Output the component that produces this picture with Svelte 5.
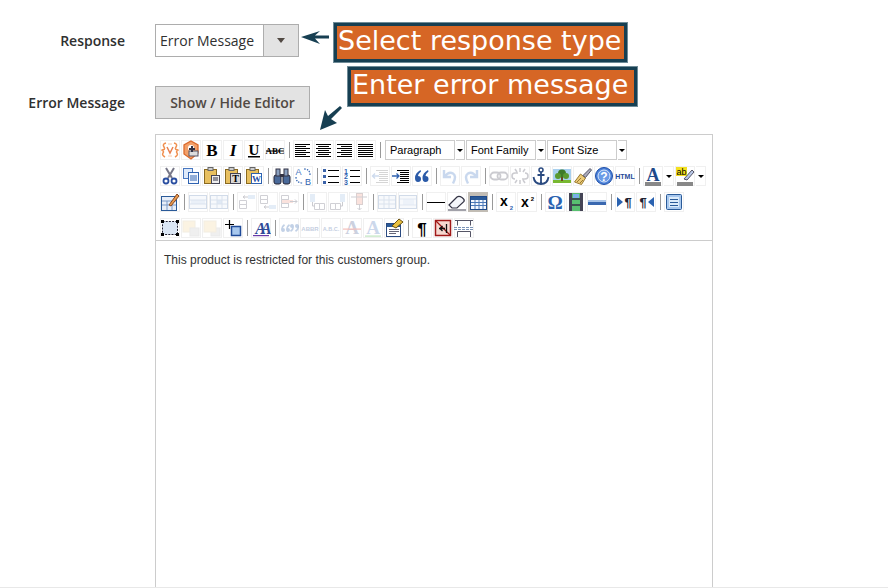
<script>
    // toolbar glyphs, all on a 20x20 grid
    const bars = (rows, color = "#000") =>
        rows.map(([x, y, w]) => `<rect x="${x}" y="${y}" width="${w}" height="1" fill="${color}"/>`).join("");

    const icons = {
        flash: `<path d="M6 3Q2 4 4 7T1.500 10q3 1 1.500 3t2 4M14 3q4 1 2 4t2.500 3q-3 1-1.500 3t-2 4" fill="none" stroke="#f09050" stroke-width="1.5"/><path d="M7 7l3 6 3-6" fill="none" stroke="#e88050" stroke-width="1.5"/><path d="M8 4h4M8 16h4" stroke="#f8c8a8"/>`,
        palette: `<path d="M10 1l7 4v8l-7 6-7-5V5z" fill="#f2a06a" stroke="#dc6a2c" stroke-width="1.300"/><circle cx="10" cy="8" r="3" fill="#fff"/><rect x="8" y="11" width="9" height="5" fill="#ddd" stroke="#556"/><path d="M11 6v6M8 9h6" stroke="#334" stroke-width="2"/>`,
        bold: `<text x="10" y="16" class="serif" font-size="17" font-weight="700" text-anchor="middle">B</text>`,
        italic: `<text x="10" y="16" class="serif" font-size="17" font-weight="700" font-style="italic" text-anchor="middle">I</text>`,
        underline: `<text x="10" y="14.500" class="serif" font-size="15" font-weight="700" text-anchor="middle">U</text><rect x="4" y="16" width="12" height="1.500"/>`,
        strike: `<text x="10" y="14" class="serif" font-size="9" font-weight="700" text-anchor="middle">ABC</text><rect x="1" y="10.500" width="18" height="1"/>`,
        left: bars([[2,4,15],[2,6,11],[2,8,15],[2,10,11],[2,12,15],[2,14,11],[2,16,15]]),
        center: bars([[2,4,15],[4,6,11],[2,8,15],[4,10,11],[2,12,15],[4,14,11],[2,16,15]]),
        right: bars([[2,4,15],[6,6,11],[2,8,15],[6,10,11],[2,12,15],[6,14,11],[2,16,15]]),
        justify: bars([[2,4,15],[2,6,15],[2,8,15],[2,10,15],[2,12,15],[2,14,15],[2,16,15]]),
        cut: `<path d="M6 2l6 10M14 2L8 12" stroke="#778" stroke-width="2"/><circle cx="6" cy="15" r="2.500" fill="none" stroke="#2a4ea0" stroke-width="1.800"/><circle cx="14" cy="15" r="2.500" fill="none" stroke="#2a4ea0" stroke-width="1.800"/>`,
        copy: `<rect x="2.500" y="2.500" width="9" height="10" fill="#dfeafa" stroke="#4a78c0"/><rect x="7.500" y="6.500" width="10" height="11" fill="#f4f8ff" stroke="#2f62b0"/><path d="M9 10h7M9 12h7M9 14h7" stroke="#2f62b0"/>`,
        paste: `<rect x="2.500" y="3.500" width="12" height="14" fill="#e8c060" stroke="#8a6a20"/><rect x="6" y="1.500" width="5" height="3" fill="#ccc" stroke="#666"/><rect x="9.500" y="9.500" width="8" height="8" fill="#eee" stroke="#445"/><path d="M11 12h5M11 14h5" stroke="#334"/>`,
        pastetext: `<rect x="2.500" y="3.500" width="12" height="14" fill="#e8c060" stroke="#8a6a20"/><rect x="6" y="1.500" width="5" height="3" fill="#ccc" stroke="#666"/><rect x="7.500" y="7.500" width="10" height="10" fill="#d8d8d8" stroke="#445"/><text x="12.500" y="16" class="serif" font-size="10" font-weight="700" text-anchor="middle">T</text>`,
        pasteword: `<rect x="2.500" y="3.500" width="12" height="14" fill="#e8c060" stroke="#8a6a20"/><rect x="6" y="1.500" width="5" height="3" fill="#ccc" stroke="#666"/><rect x="7.500" y="7.500" width="10" height="10" fill="#fff" stroke="#2f62b0"/><text x="12.500" y="16" class="serif" font-size="9" font-weight="700" fill="#1f4fa8" text-anchor="middle">W</text>`,
        find: `<rect x="2" y="9" width="7" height="9" rx="2" fill="#4a6a9a" stroke="#223"/><rect x="11" y="9" width="7" height="9" rx="2" fill="#4a6a9a" stroke="#223"/><rect x="4" y="3" width="4" height="7" fill="#8aa0c0" stroke="#334"/><rect x="12" y="3" width="4" height="7" fill="#8aa0c0" stroke="#334"/><rect x="8" y="8" width="4" height="3" fill="#334"/>`,
        replace: `<text x="5.500" y="9" class="sans" font-size="9" fill="#4a78c0" text-anchor="middle">A</text><text x="15" y="18.500" class="sans" font-size="9" fill="#2f62b0" text-anchor="middle">B</text><path d="M3 11q0 6 7 6M11 3q6 0 6 6" fill="none" stroke="#2f62b0" stroke-width="1.200" stroke-dasharray="1.500 1.200"/>`,
        ul: `<rect x="2" y="3" width="3" height="3" fill="#3a62a8"/><rect x="2" y="9" width="3" height="3" fill="#3a62a8"/><rect x="2" y="15" width="3" height="3" fill="#3a62a8"/>` + bars([[7,4,11],[7,10,11],[7,16,11]]),
        ol: `<text x="4" y="7.500" class="sans" font-size="7" font-weight="700" fill="#2f62b0" text-anchor="middle">1</text><text x="4" y="13" class="sans" font-size="7" font-weight="700" fill="#2f62b0" text-anchor="middle">2</text><text x="4" y="18.500" class="sans" font-size="7" font-weight="700" fill="#2f62b0" text-anchor="middle">3</text>` + bars([[8,4,10],[8,10,10],[8,16,10]]),
        outdent: bars([[6,4,12],[9,6,9],[9,8,9],[9,10,9],[9,12,9],[9,14,9],[6,16,12]], "#777") + `<path d="M9 10H2M5 7.500L2.500 10 5 12.500" fill="none" stroke="#5f8ac8" stroke-width="1.300"/>`,
        indent: bars([[6,4,12],[9,6,9],[9,8,9],[9,10,9],[9,12,9],[9,14,9],[6,16,12]]) + `<path d="M1 10h7M5.500 7.500L8 10l-2.500 2.500" fill="none" stroke="#2f62b0" stroke-width="1.300"/>`,
        quote: `<path d="M8.500 4Q3 7 3 12q0 4 3 4t3-3-3-3q0-2 3-4.500zM16 4q-5.500 3-5.500 8 0 4 3 4t3-3-3-3q0-2 3-4.500z" fill="#2a5aa8"/>`,
        undo: `<path d="M4 4v7h7M5 10q4-5 8-2.500t0 10" fill="none" stroke="#4f80c8" stroke-width="2.400"/>`,
        redo: `<path d="M16 4v7H9M15 10q-4-5-8-2.500t0 10" fill="none" stroke="#4f80c8" stroke-width="2.400"/>`,
        link: `<rect x="1.500" y="6.500" width="10" height="7" rx="3.500" fill="none" stroke="#556" stroke-width="1.800"/><rect x="8.500" y="6.500" width="10" height="7" rx="3.500" fill="none" stroke="#556" stroke-width="1.800"/>`,
        unlink: `<path d="M2 10q0-3 3-3h3M18 10q0 3-3 3h-3M2 10q0 3 3 3M18 10q0-3-3-3M10 2v4M10 14v4M5 3l2 3M15 17l-2-3M15 3l-2 3M5 17l2-3" fill="none" stroke="#556" stroke-width="1.500"/>`,
        anchor: `<circle cx="10" cy="4" r="2" fill="none" stroke="#2a4a80" stroke-width="1.500"/><path d="M10 6v12M6.500 9h7M2.500 11q1 7 7.500 7t7.500-7" fill="none" stroke="#2a4a80" stroke-width="1.800"/>`,
        image: `<rect x="1" y="3" width="18" height="14" fill="#a8d0ee"/><rect x="1" y="14" width="18" height="3" fill="#78b830"/><circle cx="10" cy="7.500" r="4" fill="#3e7a28"/><circle cx="6" cy="10" r="3" fill="#5a9a30"/><circle cx="14" cy="10" r="3" fill="#5a9a30"/><rect x="9" y="11" width="2" height="4" fill="#6a4a20"/>`,
        cleanup: `<path d="M1.500 16l6-8 5 4-4 6.500z" fill="#eccb78" stroke="#9a7a30"/><path d="M10 9.500l7-7 1.500 1.500-6 7.500z" fill="#aab" stroke="#556"/><path d="M4 16l4-4M7 17l3-3" stroke="#9a7a30"/>`,
        help: `<circle cx="10" cy="10" r="8.500" fill="#4a80d8" stroke="#1f4fa8"/><circle cx="10" cy="10" r="6" fill="#6a9ae6" stroke="#dbe8fb"/><text x="10" y="14.500" class="sans" font-size="12" font-weight="700" fill="#fff" text-anchor="middle">?</text>`,
        html: `<text x="10" y="13" class="sans" font-size="7" font-weight="700" fill="#1f4a98" text-anchor="middle">HTML</text>`,
        fore: `<text x="10" y="15" class="serif" font-size="18" font-weight="700" fill="#1f4a8a" text-anchor="middle">A</text><rect x="2" y="16" width="16" height="4" fill="#888"/>`,
        back: `<rect x="1" y="1" width="11" height="9" fill="#f4e020"/><text x="6.500" y="9" class="sans" font-size="9" text-anchor="middle">ab</text><path d="M9 13l8-9 2 2-7 8z" fill="#b8c8e8" stroke="#556"/><rect x="2" y="16" width="16" height="4" fill="#888"/>`,
        tableprops: `<rect x="1.500" y="4.500" width="15" height="14" fill="#e8eef8" stroke="#2a5a98"/><path d="M2 9h14M2 13h14M7 9v9M12 9v9" stroke="#7a9ac8"/><path d="M9 13L17 2l2 2-8 10z" fill="#e89a50" stroke="#8a4a20"/>`,
        rowprops: `<rect x="1.500" y="3.500" width="17" height="13" fill="#e8eef8" stroke="#6a8ab8"/><rect x="3" y="8" width="14" height="4" fill="#bcd0ea"/><path d="M2 8h16M2 12h16" stroke="#8aa4c8"/>`,
        cellprops: `<rect x="1.500" y="3.500" width="17" height="13" fill="#e8eef8" stroke="#6a8ab8"/><rect x="8" y="8" width="5" height="4" fill="#9ab8e0"/><path d="M2 8h16M2 12h16M8 4v12M13 4v12" stroke="#8aa4c8"/>`,
        rowbefore: `<path d="M2.500 8.500h7v4h-7zM2.500 12.500h7v4h-7z" fill="#fff" stroke="#667"/><rect x="11" y="3" width="7" height="4" fill="#a8c4e8"/><path d="M11 5H6M8 3.500L6 5l2 1.500" stroke="#556" fill="none"/>`,
        rowafter: `<path d="M2.500 3.500h7v4h-7zM2.500 7.500h7v4h-7z" fill="#fff" stroke="#667"/><rect x="11" y="13" width="7" height="4" fill="#a8c4e8"/><path d="M11 15H6M8 13.500L6 15l2 1.500" stroke="#556" fill="none"/>`,
        rowdel: `<path d="M2.500 3.500h7v4h-7zM2.500 7.500h7v4h-7zM2.500 11.500h7v4h-7z" fill="#fff" stroke="#667"/><rect x="3" y="8" width="11" height="3" fill="#f0a090"/><path d="M11 9.500h7M16 7.500l2 2-2 2" stroke="#556" fill="none"/>`,
        colbefore: `<path d="M7.500 11.500h5v6h-5zM12.500 11.500h5v6h-5z" fill="#fff" stroke="#667"/><rect x="3" y="2" width="5" height="8" fill="#a8c4e8"/><path d="M5.500 10v4H8" stroke="#556" fill="none"/>`,
        colafter: `<path d="M2.500 11.500h5v6h-5zM7.500 11.500h5v6h-5z" fill="#fff" stroke="#667"/><rect x="12" y="2" width="5" height="8" fill="#a8c4e8"/><path d="M14.500 10v4H12" stroke="#556" fill="none"/>`,
        coldel: `<rect x="7.500" y="1.500" width="6" height="11" fill="#f0a090" stroke="#866"/><path d="M2 5h16M10.500 12v6M8.500 16l2 2 2-2" stroke="#667" fill="none"/>`,
        split: `<rect x="1.500" y="3.500" width="17" height="13" fill="#e8eef8" stroke="#6a8ab8"/><path d="M2 8h16M2 12h16M7 4v12M12 4v12" stroke="#8aa4c8"/>`,
        merge: `<rect x="1.500" y="3.500" width="17" height="13" fill="#e8eef8" stroke="#6a8ab8"/><rect x="5" y="7" width="11" height="6" fill="#c4d6ee"/><path d="M2 7h16M2 13h16" stroke="#a0b8d8"/>`,
        hr: `<rect x="1" y="10" width="18" height="1"/>`,
        eraser: `<path d="M2 13l8-8q2-1.500 5 .500t2 4l-7 6.500H5z" fill="#f4f6fa" stroke="#334" stroke-width="1.200"/><path d="M1 18h18" stroke="#445"/>`,
        table: `<rect x="2.500" y="4.500" width="16" height="13" fill="#f4f8ff" stroke="#1f4a8a"/><rect x="3" y="5" width="15" height="3" fill="#2a5a98"/><path d="M3 10.500h15M3 13.500h15M7 8v9M11 8v9M15 8v9" stroke="#4a78b8"/>`,
        sub: `<text x="8" y="14" class="sans" font-size="14" font-weight="700" text-anchor="middle">x</text><text x="15.500" y="18" class="sans" font-size="6" font-weight="700" fill="#2f62b0" text-anchor="middle">2</text>`,
        sup: `<text x="8" y="15" class="sans" font-size="14" font-weight="700" text-anchor="middle">x</text><text x="15.500" y="9" class="sans" font-size="6" font-weight="700" text-anchor="middle">2</text>`,
        omega: `<text x="10" y="16.500" class="serif" font-size="19" font-weight="700" fill="#2a62b0" text-anchor="middle">Ω</text>`,
        film: `<rect x="3" y="1" width="14" height="18" fill="#58c070"/><rect x="3" y="1" width="3" height="18" fill="#445"/><rect x="14" y="1" width="3" height="18" fill="#445"/><path d="M6 7h8M6 13h8" stroke="#334" stroke-width="1.500"/><rect x="7" y="2" width="6" height="4" fill="#7ab0e8"/>`,
        rule: `<rect x="1" y="8" width="18" height="5" fill="#3a68b0"/><rect x="1" y="8" width="18" height="2" fill="#a8c4e8"/>`,
        ltr: `<path d="M2 5l6 5-6 5z" fill="#2a62b0"/><text x="13" y="15" class="sans" font-size="13" font-weight="700" fill="#223" text-anchor="middle">¶</text>`,
        rtl: `<path d="M18 5l-6 5 6 5z" fill="#2a62b0"/><text x="7" y="15" class="sans" font-size="13" font-weight="700" fill="#223" text-anchor="middle">¶</text>`,
        fullscreen: `<rect x="2.500" y="2.500" width="15" height="15" rx="1" fill="#a8c8ee" stroke="#2a5a98"/><rect x="5" y="5" width="10" height="10" fill="#dcebfa"/><path d="M6 7.500h8M6 10.500h8M6 13.500h8" stroke="#2a5a98"/>`,
        layer: `<rect x="2.500" y="3.500" width="15" height="13" fill="#dbe6f4" stroke="#223" stroke-dasharray="2 1.200"/><rect x="1" y="2" width="3" height="3"/><rect x="16" y="2" width="3" height="3"/><rect x="1" y="15" width="3" height="3"/><rect x="16" y="15" width="3" height="3"/>`,
        forward: `<rect x="2" y="3" width="12" height="11" fill="#f2d8a0" stroke="#d8c8a0"/><rect x="9" y="10" width="9" height="8" fill="#ccc" stroke="#bbb"/>`,
        backward: `<rect x="9" y="10" width="9" height="8" fill="#ccc" stroke="#bbb"/><rect x="2" y="3" width="12" height="11" fill="#f2d8a0" stroke="#d8c8a0"/>`,
        absolute: `<rect x="8.500" y="8.500" width="9" height="9" fill="#a8c8ee" stroke="#1f4a98" stroke-width="1.500"/><path d="M6.500 2v9M2 6.500h9" stroke="#000" stroke-width="1.200"/>`,
        styleprops: `<text x="10" y="15.500" class="serif" font-size="16" font-weight="700" font-style="italic" fill="#2f4a98" letter-spacing="-5" text-anchor="middle">AA</text><rect x="2" y="17" width="16" height="1.200" fill="#6a3aa8"/>`,
        cite: `<path d="M5 6q-3 2-3 5t2 3 2-2-2-2q0-1 2-2.500zM10 6q-3 2-3 5t2 3 2-2-2-2q0-1 2-2.500zM12 14q3-2 3-5t-2-3-2 2 2 2q0 1-2 2.500zM17 14q3-2 3-5t-2-3-2 2 2 2q0 1-2 2.500z" fill="#3a6ab0"/>`,
        abbr: `<text x="10" y="13" class="sans" font-size="6" font-weight="700" fill="#3a5a98" text-anchor="middle">ABBR</text>`,
        acronym: `<text x="10" y="13" class="sans" font-size="5.500" font-weight="700" fill="#3a5a98" text-anchor="middle">A.B.C.</text>`,
        del: `<text x="10" y="16" class="serif" font-size="19" font-weight="700" fill="#5a6a98" text-anchor="middle">A</text><rect x="1" y="10.500" width="18" height="1.200" fill="#e03020"/>`,
        ins: `<text x="10" y="16" class="serif" font-size="19" font-weight="700" fill="#5a80c0" text-anchor="middle">A</text><rect x="2" y="17.500" width="16" height="1.200" fill="#30b030"/>`,
        attribs: `<rect x="2.500" y="5.500" width="14" height="13" fill="#fff" stroke="#2a4a80"/><path d="M3 6h13v3H3z" fill="#2a5a98"/><path d="M5 11.500h10M5 13.500h10M5 15.500h7" stroke="#667"/><path d="M8 8l7-7 4 3-7 6z" fill="#e8c040" stroke="#6a5010"/>`,
        para: `<text x="10" y="16.500" class="sans" font-size="17" font-weight="700" text-anchor="middle">¶</text>`,
        nbsp: `<rect x="2.500" y="2.500" width="15" height="15" fill="#f6d8d0" stroke="#a01818" stroke-width="1.500"/><path d="M3 3l14 14" stroke="#a01818" stroke-width="1.300"/><path d="M13.500 6v9M6 10.500h6M9.500 8L7 10.500 9.500 13" stroke="#111" fill="none" stroke-width="1.300"/>`,
        pagebreak: `<path d="M1 2.500h18M3.500 2.500v5M16.500 2.500v5M3.500 13.500h13M3.500 13.500v5.500M16.500 13.500v5.500" fill="none" stroke="#556"/><path d="M0 9.500h20M0 11.500h20" stroke="#7a94b8" stroke-dasharray="3 1"/>`
    };

    // "|" marks a separator, "-" a greyed out button, "*" a pressed one
    const row1Start = ["flash","palette","bold","italic","underline","strike","|","left","center","right","justify","|"];
    const row2 = ["cut","copy","paste","pastetext","pasteword","|","find","replace","|","ul","ol","|","-outdent","indent","quote","|","-undo","-redo","|","-link","-unlink","anchor","image","cleanup","help","html","|"];
    const row3 = ["tableprops","|","-rowprops","-cellprops","|","-rowbefore","-rowafter","-rowdel","|","-colbefore","-colafter","-coldel","|","-split","-merge","|","hr","eraser","*table","|","sub","sup","|","omega","film","rule","|","ltr","rtl","|","fullscreen"];
    const row4 = ["layer","-forward","-backward","absolute","|","styleprops","|","-cite","-abbr","-acronym","-del","-ins","attribs","|","para","nbsp","pagebreak"];

    const parse = (t) => ({
        sep: t === "|",
        off: t[0] === "-",
        active: t[0] === "*",
        name: t.replace(/^[-*]/, "")
    });
</script>

{#snippet tools(list)}
    {#each list.map(parse) as t}
        {#if t.sep}
            <span class="sep"></span>
        {:else}
            <span class="btn" class:off={t.off} class:active={t.active}>
                <svg viewBox="0 0 20 20" width="20" height="20">{@html icons[t.name]}</svg>
            </span>
        {/if}
    {/each}
{/snippet}

{#snippet listbox(label, width)}
    <span class="listbox" style="width: {width}px">{label}</span>
    <span class="listarrow"><i class="caret"></i></span>
{/snippet}

{#snippet split(name)}
    <span class="btn">
        <svg viewBox="0 0 20 20" width="20" height="20">{@html icons[name]}</svg>
    </span>
    <span class="listarrow small"><i class="caret"></i></span>
{/snippet}

<div class="page">
    <div class="field">
        <div class="label">Response</div>
        <div class="select">
            <span class="select-value">Error Message</span>
            <span class="select-action"><i class="select-caret"></i></span>
        </div>
    </div>

    <div class="field second">
        <div class="label">Error Message</div>
        <div class="control">
            <button class="toggle" type="button">Show / Hide Editor</button>
            <div class="editor">
                <div class="toolbar">
                    <div class="row">
                        {@render tools(row1Start)}
                        <span class="push"></span>
                        {@render listbox("Paragraph", 70)}
                        {@render listbox("Font Family", 70)}
                        {@render listbox("Font Size", 70)}
                    </div>
                    <div class="row">
                        {@render tools(row2)}
                        {@render split("fore")}
                        {@render split("back")}
                    </div>
                    <div class="row">{@render tools(row3)}</div>
                    <div class="row">{@render tools(row4)}</div>
                </div>
                <div class="content">This product is restricted for this customers group.</div>
            </div>
        </div>
    </div>

    <svg class="arrow one" viewBox="0 0 32 20" width="32" height="20">
        <path d="M1 10L20 4l-5 4.500 14 0v3l-14 0 5 5.500z" fill="#173f52"/>
    </svg>
    <svg class="arrow two" viewBox="0 0 26 30" width="26" height="30">
        <path d="M1 27L6 7l3 6L21 3l2 2-11 11 6 4z" fill="#173f52"/>
    </svg>
    <div class="note first">Select response type</div>
    <div class="note next">Enter error message</div>
</div>

<style>
    :global(body) {
        margin: 0;
        background: #fff;
    }

    .page {
        position: relative;
        height: 588px;
        overflow: hidden;
        box-sizing: border-box;
        padding-top: 24px;
        border-bottom: 1px solid #e8e8e8;
        font-family: "Open Sans", sans-serif;
        color: #303030;
    }

    .field {
        display: flex;
        gap: 30px;
    }

    .field.second {
        margin-top: 29px;
    }

    .label {
        width: 125px;
        text-align: right;
        font-size: 14px;
        font-weight: 600;
        line-height: 33px;
    }

    .select {
        display: flex;
        width: 144px;
        height: 33px;
        box-sizing: border-box;
        border: 1px solid #adadad;
        font-size: 14px;
        line-height: 31px;
    }

    .select-value {
        flex: 1;
        padding-left: 4px;
    }

    .select-action {
        width: 35px;
        box-sizing: border-box;
        display: flex;
        align-items: center;
        justify-content: center;
        background: #e3e3e3;
        border-left: 1px solid #adadad;
    }

    .select-caret {
        border-left: 4px solid transparent;
        border-right: 4px solid transparent;
        border-top: 5px solid #514943;
    }

    .toggle {
        display: block;
        width: 155px;
        height: 33px;
        padding: 0;
        background: #e3e3e3;
        border: 1px solid #adadad;
        font: 600 14px "Open Sans", sans-serif;
        color: #514943;
    }

    .editor {
        width: 558px;
        height: 600px;
        box-sizing: border-box;
        margin-top: 15px;
        border: 1px solid #ccc;
    }

    .toolbar {
        height: 106px;
        box-sizing: border-box;
        padding: 5px 0 0 4px;
        border-bottom: 1px solid #ccc;
    }

    .row {
        display: flex;
        gap: 1px;
        height: 20px;
        margin-bottom: 6px;
    }

    .push {
        width: 0;
    }

    .btn {
        display: flex;
        align-items: center;
        justify-content: center;
        flex: none;
        width: 20px;
        height: 20px;
        box-sizing: border-box;
        border: 1px solid #f0f0f0;
    }

    .btn svg {
        flex: none;
        margin: -1px;
    }

    .btn.off svg {
        opacity: 0.3;
    }

    .btn.active {
        background: #c2bdb5;
        border-color: #c2bdb5;
    }

    .sep {
        width: 6px;
        flex: none;
        background: linear-gradient(#999, #999) 3px 2px / 1px 16px no-repeat;
    }

    .listbox {
        height: 20px;
        box-sizing: border-box;
        border: 1px solid #ccc;
        padding-left: 4px;
        font: 11px/18px "Liberation Sans", sans-serif;
        color: #000;
    }

    .listarrow {
        display: flex;
        align-items: center;
        justify-content: center;
        width: 9px;
        height: 20px;
        box-sizing: border-box;
        border: 1px solid #ccc;
        border-left: none;
    }

    .listarrow.small {
        border-color: #f0f0f0;
        width: 10px;
    }

    .caret {
        border-left: 3px solid transparent;
        border-right: 3px solid transparent;
        border-top: 3px solid #000;
    }

    .content {
        padding: 11px 8px;
        font: 12px/16px "Liberation Sans", sans-serif;
        color: #333;
    }

    .note {
        position: absolute;
        box-sizing: border-box;
        height: 41px;
        padding-left: 1px;
        border: 4px solid #173f52;
        outline: 1px solid #6f8b97;
        outline-offset: -1px;
        background: #d66625;
        color: #fff;
        font: 27px/29px "DejaVu Sans", sans-serif;
        white-space: nowrap;
    }

    .first {
        left: 333px;
        top: 22px;
        width: 295px;
    }

    .next {
        left: 347px;
        top: 66px;
        width: 291px;
    }

    .arrow {
        position: absolute;
    }

    .one {
        left: 300px;
        top: 27px;
    }

    .two {
        left: 319px;
        top: 103px;
    }

    svg :global(.serif) {
        font-family: "Liberation Serif", serif;
    }

    svg :global(.sans) {
        font-family: "Liberation Sans", sans-serif;
    }
</style>
